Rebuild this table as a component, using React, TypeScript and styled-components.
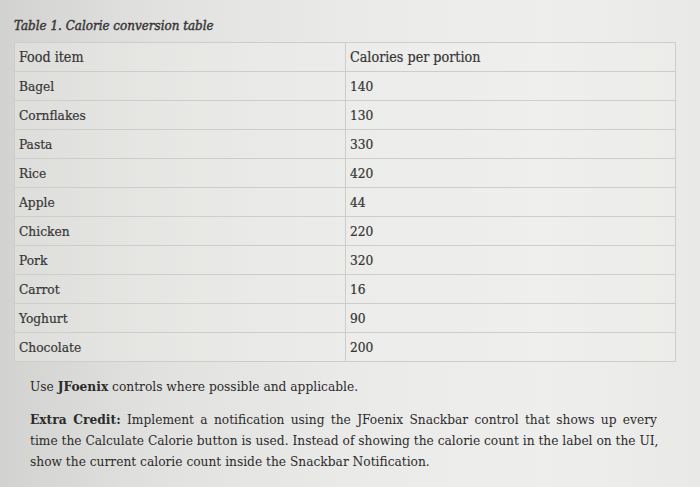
import React from "react";
import styled, { createGlobalStyle } from "styled-components";

const Global = createGlobalStyle`
  html, body { margin: 0; padding: 0; }
  body {
    width: 700px;
    height: 487px;
    overflow: hidden;
    background: linear-gradient(90deg, #d2d2d0 0%, #e1e1df 22%, #eaeae9 50%, #eeeeed 78%, #e9e9e7 100%);
    font-family: "Liberation Serif", "DejaVu Serif", serif;
    color: #333;
  }
`;

const Page = styled.div`
  padding: 16px 25px 0 14px;
  display: flex;
  flex-direction: column;
`;

const Caption = styled.div`
  font-family: "DejaVu Serif Condensed", "Liberation Serif", serif;
  font-style: italic;
  font-size: 13.3px;
  color: #383838;
  -webkit-text-stroke: 0.45px #383838;
  height: 20px;
  line-height: 20px;
  margin-bottom: 6px;
`;

const Table = styled.div`
  display: grid;
  grid-template-columns: 331px 1fr;
  border-top: 1px solid #cdcdcb;
  border-left: 1px solid #cdcdcb;
  width: 661px;
`;

const Cell = styled.div<{ $header?: boolean }>`
  height: 28px;
  border-right: 1px solid #cdcdcb;
  border-bottom: 1px solid #cdcdcb;
  display: flex;
  align-items: center;
  padding-left: 4px;
  font-family: "DejaVu Serif Condensed", "Liberation Serif", serif;
  font-size: ${(p) => (p.$header ? 14.2 : 13.6)}px;
  color: #363636;
  -webkit-text-stroke: 0.2px #363636;
  background: rgba(240, 240, 238, 0.35);
`;

const Notes = styled.div`
  padding-left: 16px;
  margin-top: 14px;
  color: #2b2b2b;
  line-height: 21px;
  font-family: "DejaVu Serif Condensed", "Liberation Serif", serif;
  font-size: 13.6px;
`;

const Para = styled.div`
  margin: 0 0 12px 0;
`;

const Line = styled.div<{ $justify?: boolean }>`
  width: 627px;
  white-space: nowrap;
  text-align: ${(p) => (p.$justify ? "justify" : "left")};
  text-align-last: ${(p) => (p.$justify ? "justify" : "left")};
`;

const rows: [string, string][] = [
  ["Bagel", "140"],
  ["Cornflakes", "130"],
  ["Pasta", "330"],
  ["Rice", "420"],
  ["Apple", "44"],
  ["Chicken", "220"],
  ["Pork", "320"],
  ["Carrot", "16"],
  ["Yoghurt", "90"],
  ["Chocolate", "200"],
];

export default function App() {
  return (
    <>
      <Global />
      <Page>
        <Caption>Table 1. Calorie conversion table</Caption>
        <Table>
          <Cell $header>Food item</Cell>
          <Cell $header>Calories per portion</Cell>
          {rows.map(([food, cal]) => (
            <React.Fragment key={food}>
              <Cell>{food}</Cell>
              <Cell>{cal}</Cell>
            </React.Fragment>
          ))}
        </Table>
        <Notes>
          <Para>
            <Line>
              Use <b>JFoenix</b> controls where possible and applicable.
            </Line>
          </Para>
          <Para>
            <Line $justify>
              <b>Extra Credit:</b> Implement a notification using the JFoenix Snackbar control that shows up every
            </Line>
            <Line $justify>
              time the Calculate Calorie button is used. Instead of showing the calorie count in the label on the UI,
            </Line>
            <Line>show the current calorie count inside the Snackbar Notification.</Line>
          </Para>
        </Notes>
      </Page>
    </>
  );
}
